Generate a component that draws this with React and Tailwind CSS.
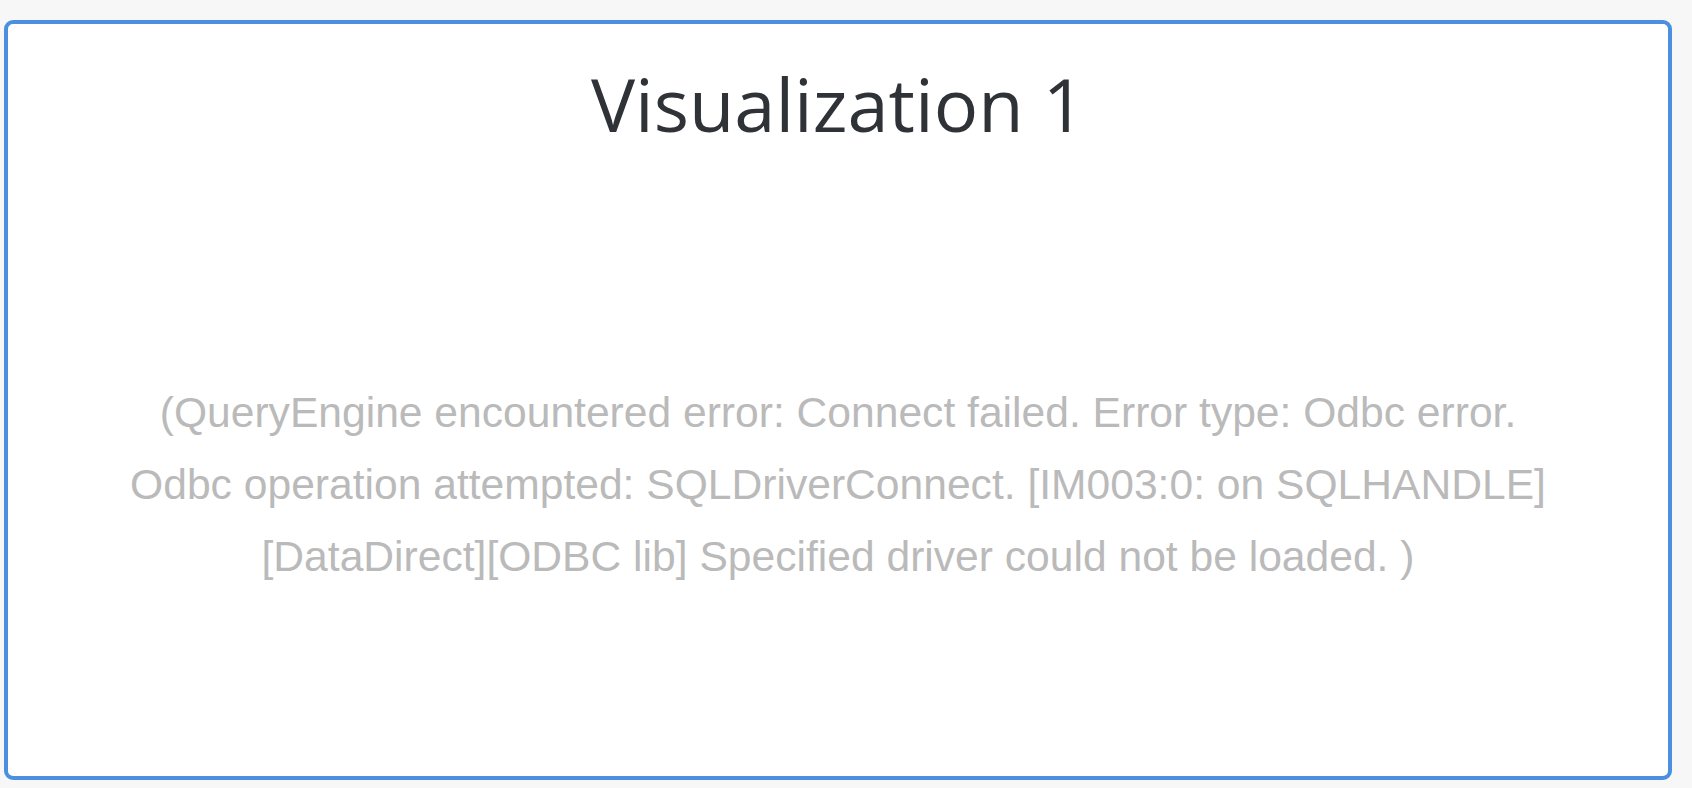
import React from "react";

const lines = [
  "(QueryEngine encountered error: Connect failed. Error type: Odbc error.",
  "Odbc operation attempted: SQLDriverConnect. [IM003:0: on SQLHANDLE]",
  "[DataDirect][ODBC lib] Specified driver could not be loaded. )",
];

const App = () => {
  return (
    <div className="min-h-screen bg-[#f7f7f7] pt-[20px] pl-[4px] pr-[20px] pb-[8px]">
      <div className="h-[760px] border-[4px] border-[#4a8fe0] rounded-[9px] bg-white flex flex-col items-center">
        <h1 className="mt-[43px] text-[74px] leading-[74px] font-['Open_Sans',sans-serif] text-[#2f3338]">
          Visualization 1
        </h1>

        {/* error message */}
        <div className="mt-[235px] text-center text-[42.6px] leading-[72px] font-['Liberation_Sans',Arial,sans-serif] text-[#bababa]">
          {lines.map((line) => (
            <div key={line} className="whitespace-nowrap">
              {line}
            </div>
          ))}
        </div>
      </div>
    </div>
  );
};

export default App;
